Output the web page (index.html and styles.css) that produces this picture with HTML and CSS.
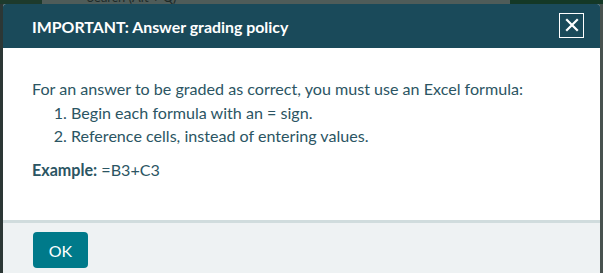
FILE: index.html
```html
<!DOCTYPE html>
<html>
<head>
<meta charset="utf-8">
<link rel="stylesheet" href="styles.css">
</head>
<body>
<div class="backdrop">
  <div class="topbar">
    <div class="tb-left"></div>
    <div class="tb-mid"><span class="search">Search (Alt + Q)</span></div>
    <div class="tb-right"></div>
  </div>
  <div class="row">
    <div class="side-left"></div>
    <div class="dialog">
      <div class="header">
        <h1 class="title">IMPORTANT: Answer grading policy</h1>
        <button class="close" aria-label="Close">
          <svg width="14" height="14" viewBox="0 0 14 14"><path d="M2 2 L12 12 M12 2 L2 12" stroke="#fff" stroke-width="2.2" stroke-linecap="square"/></svg>
        </button>
      </div>
      <div class="body">
        <p class="intro">For an answer to be graded as correct, you must use an Excel formula:</p>
        <ol class="steps">
          <li>Begin each formula with an = sign.</li>
          <li>Reference cells, instead of entering values.</li>
        </ol>
        <p class="example"><strong>Example:</strong> =B3+C3</p>
      </div>
      <div class="footer">
        <button class="ok">OK</button>
      </div>
    </div>
    <div class="side-right"></div>
  </div>
</div>
</body>
</html>
```

FILE: styles.css
```css
html, body {
  margin: 0;
  padding: 0;
  width: 603px;
  height: 273px;
  overflow: hidden;
  background: #3f4a48;
  font-family: "Lato", "Open Sans", sans-serif;
}
.backdrop {
  display: flex;
  flex-direction: column;
  height: 273px;
}
.topbar {
  display: flex;
  height: 4px;
  overflow: hidden;
  flex: none;
}
.tb-left { width: 42px; background: #1d3a2c; }
.tb-mid {
  flex: 1;
  background: #4f5c59;
  position: relative;
  overflow: hidden;
}
.search {
  position: absolute;
  left: 45px;
  top: -11px;
  font-size: 13px;
  color: #1e2a28;
  white-space: nowrap;
}
.tb-right { width: 93px; background: #143826; }
.row {
  display: flex;
  flex: 1;
}
.side-left { width: 3px; background: #2c3735; flex: none; }
.side-right { width: 3px; background: #48524f; flex: none; }
.dialog {
  flex: 1;
  display: flex;
  flex-direction: column;
  background: #fff;
  border-radius: 3px 3px 0 0;
  overflow: hidden;
}
.header {
  background: #1a4a5a;
  height: 44px;
  display: flex;
  align-items: center;
  justify-content: space-between;
  padding: 0 16px 0 29px;
  flex: none;
}
.title {
  margin: 0;
  color: #fff;
  font-size: 15.9px;
  font-weight: 700;
}
.close {
  width: 25px;
  height: 25px;
  border: 1px solid #fff;
  background: transparent;
  padding: 0;
  display: flex;
  align-items: center;
  justify-content: center;
  margin-top: -2px;
}
.body {
  flex: 1;
  padding: 29px 29px 0 29px;
  color: #2b5563;
  font-size: 16.1px;
  line-height: 23.5px;
}
.intro { margin: 0; }
.steps {
  margin: 0;
  padding-left: 39px;
}
.example {
  margin: 10.5px 0 0 0;
}
.example strong { font-weight: 700; }
.footer {
  flex: none;
  background: #eef2f3;
  border-top: 3px solid #d0dcdd;
  padding: 9px 0 0 30px;
  box-sizing: border-box;
  height: 53px;
}
.ok {
  width: 55px;
  height: 36px;
  background: #007a8a;
  color: #fff;
  border: none;
  border-radius: 4px;
  font-family: inherit;
  font-size: 16px;
  padding: 0;
}
```
